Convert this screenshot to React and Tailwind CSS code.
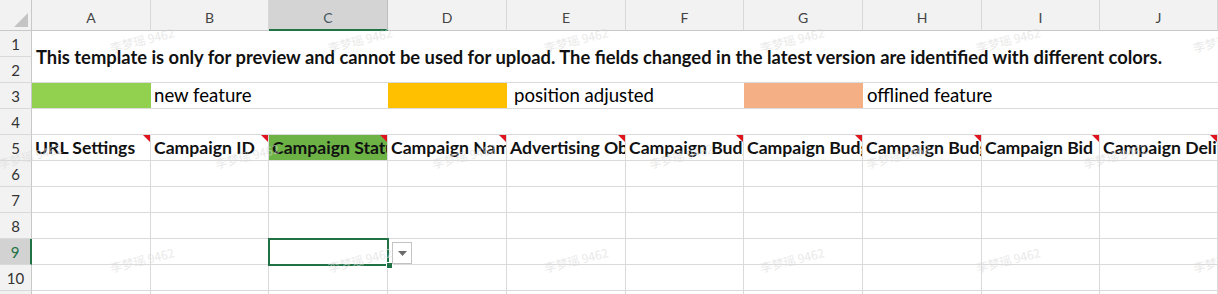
import React from 'react';

const LETTERS = ['A', 'B', 'C', 'D', 'E', 'F', 'G', 'H', 'I', 'J'];
const HEADINGS = [
  'URL Settings',
  'Campaign ID',
  'Campaign Status',
  'Campaign Name',
  'Advertising Objective',
  'Campaign Budget Mode',
  'Campaign Budget',
  'Campaign Budget Optimization',
  'Campaign Bid',
  'Campaign Delivery',
];

const WATERMARKS = [
  [142, 40], [360, 40], [576, 40], [792, 40], [1008, 40], [1225, 40],
  [30, 156], [247, 156], [464, 156], [681, 156], [898, 156], [1115, 156],
  [142, 260], [360, 260], [576, 260], [792, 260], [1008, 260], [1225, 260],
];

function RowHead({ n, active }) {
  return (
    <div
      className={`flex items-center justify-center pt-[2px] text-[15px] border-b border-[#d9d9d9] ${
        active
          ? 'bg-[#d2d2d2] text-[#217346] border-r-2 border-r-[#217346]'
          : 'bg-[#f2f2f2] text-[#333] border-r border-r-[#c8c8c8]'
      }`}
    >
      {n}
    </div>
  );
}

function CommentMark() {
  return (
    <svg className="absolute top-0 right-0" width="7" height="7" viewBox="0 0 7 7">
      <polygon points="0,0 7,0 7,7" fill="#e0141e" />
    </svg>
  );
}

function SelectedCell() {
  return (
    <div className="relative border-r border-b border-[#dadada]">
      <div className="absolute -left-[1px] -top-[1px] w-[121px] h-[28px] border-2 border-[#217346] z-10" />
      <div className="absolute left-[117px] top-[23px] w-[7px] h-[7px] bg-[#217346] border border-white z-20" />
      <div className="absolute left-[123px] top-[3px] w-[20px] h-[22px] bg-white border border-[#c3c3c3] flex items-center justify-center z-20">
        <svg width="9" height="5" viewBox="0 0 9 5">
          <polygon points="0,0 9,0 4.5,5" fill="#6b6b6b" />
        </svg>
      </div>
    </div>
  );
}

export default function App() {
  return (
    <div className="relative w-[1218px] h-[294px] overflow-hidden bg-white font-['Lato','Liberation_Sans',sans-serif] text-[#111]">
      <div className="grid grid-cols-[32px_119px_118px_119px_119px_119px_118px_119px_119px_118px_1fr] grid-rows-[31px_repeat(11,26px)]">
        {/* header row */}
        <div className="relative bg-[#f2f2f2] border-r border-b border-[#c8c8c8]">
          <svg className="absolute right-[3px] bottom-[3px]" width="14" height="14" viewBox="0 0 14 14">
            <polygon points="14,0 14,14 0,14" fill="#c4c4c4" />
          </svg>
        </div>
        {LETTERS.map((l) =>
          l === 'C' ? (
            <div
              key={l}
              className="flex items-center justify-center pt-[5px] text-[14px] bg-[#d4d4d4] text-[#465860] border-r border-[#bdbdbd] border-b-2 border-b-[#217346]"
            >
              {l}
            </div>
          ) : (
            <div
              key={l}
              className="flex items-center justify-center pt-[5px] text-[14px] bg-[#f2f2f2] text-[#444] border-r border-r-[#d8d8d8] border-b border-b-[#c8c8c8]"
            >
              {l}
            </div>
          )
        )}

        {/* rows 1-2: notice */}
        <RowHead n={1} />
        <div className="col-span-10 row-span-2 flex items-center pl-[4px] pt-[3px] border-b border-[#dadada] font-bold text-[18.35px] whitespace-nowrap">
          This template is only for preview and cannot be used for upload. The fields changed in the latest version are identified with different colors.
        </div>
        <RowHead n={2} />

        {/* row 3: legend */}
        <RowHead n={3} />
        <div className="bg-[#92d050] border-b border-[#dadada]" />
        <div className="col-span-2 flex items-center pl-[3px] pt-[1px] text-[18.6px] text-black border-b border-[#dadada]">new feature</div>
        <div className="bg-[#ffc000] border-b border-[#dadada]" />
        <div className="col-span-2 flex items-center pl-[7px] pt-[1px] text-[18.6px] text-black border-b border-[#dadada]">position adjusted</div>
        <div className="bg-[#f4b084] border-b border-[#dadada]" />
        <div className="col-span-3 flex items-center pl-[4px] pt-[1px] text-[18.6px] text-black border-b border-[#dadada]">offlined feature</div>

        {/* row 4 */}
        <RowHead n={4} />
        <div className="col-span-10 border-b border-[#dadada]" />

        {/* row 5: field headings */}
        <RowHead n={5} />
        {HEADINGS.map((h, i) => (
          <div
            key={h}
            className={`relative flex items-center pl-[3px] pt-[2px] overflow-hidden whitespace-nowrap font-bold text-[17.6px] border-r border-b border-[#dadada] ${
              i === 2 ? 'bg-[#6cb245]' : ''
            }`}
          >
            {h}
            <CommentMark />
          </div>
        ))}

        {/* rows 6-11 */}
        {[6, 7, 8, 9, 10, 11].map((r) => (
          <React.Fragment key={r}>
            <RowHead n={r} active={r === 9} />
            {LETTERS.map((l) =>
              r === 9 && l === 'C' ? (
                <SelectedCell key={l} />
              ) : (
                <div key={l} className="border-r border-b border-[#dadada]" />
              )
            )}
          </React.Fragment>
        ))}
      </div>

      {/* watermark */}
      {WATERMARKS.map(([x, y], i) => (
        <span
          key={i}
          className="absolute pointer-events-none whitespace-nowrap text-[12px] text-[#dcdcdc] opacity-60 -translate-x-1/2 -translate-y-1/2 -rotate-[14deg] font-['Noto_Sans_CJK_SC',sans-serif] z-30"
          style={{ left: x, top: y }}
        >
          李梦瑶 9462
        </span>
      ))}
    </div>
  );
}
